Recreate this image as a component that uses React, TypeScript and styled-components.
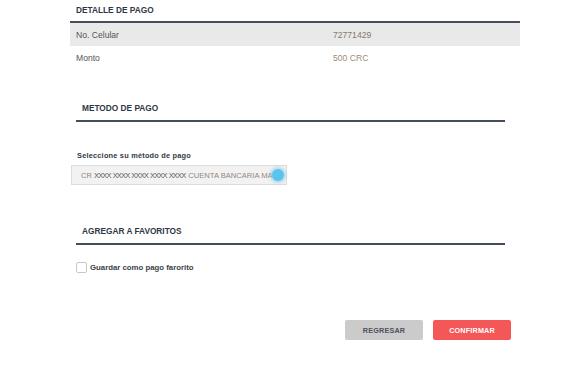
import styled, { createGlobalStyle } from "styled-components";

const GlobalStyle = createGlobalStyle`
    html, body {
        margin: 0;
        padding: 0;
        background: #ffffff;
        font-family: "Liberation Sans", Arial, sans-serif;
    }
`;

const Page = styled.div`
    width: 450px;
    padding-left: 70px;
`;

const SectionTitle = styled.div<{ $inset?: boolean }>`
    margin-left: ${(p) => (p.$inset ? "6px" : "0")};
    margin-right: ${(p) => (p.$inset ? "15px" : "0")};
    padding-left: 6px;
    line-height: ${(p) => (p.$inset ? "24px" : "21px")};
    font-size: 8.3px;
    font-weight: bold;
    color: #2e3746;
    border-bottom: 2px solid #434d5d;
`;

const DetailRow = styled.div<{ $shaded?: boolean }>`
    display: grid;
    grid-template-columns: 257px 1fr;
    align-items: center;
    height: 23px;
    padding-left: 6px;
    font-size: 8.6px;
    color: #555555;
    background: ${(p) => (p.$shaded ? "#e9e9e9" : "transparent")};
`;

const Value = styled.span<{ $tone: string }>`
    color: ${(p) => p.$tone};
`;

const Block = styled.div<{ $top: number }>`
    margin-top: ${(p) => p.$top}px;
`;

const FieldLabel = styled.div`
    margin-top: 29px;
    padding-left: 7px;
    font-size: 7.4px;
    font-weight: bold;
    letter-spacing: 0.2px;
    line-height: 10px;
    color: #333a44;
`;

const Select = styled.div`
    margin-top: 4px;
    margin-left: 1px;
    display: flex;
    align-items: center;
    padding-left: 9px;
    box-sizing: border-box;
    width: 216px;
    height: 20px;
    background: #f2f2f2;
    border: 1px solid #dcdcdc;
`;

const SelectText = styled.span`
    font-size: 7.6px;
    color: #94877b;
    white-space: nowrap;
`;

const Masked = styled.span`
    color: #5a5a5a;
    letter-spacing: -0.9px;
    word-spacing: 0.8px;
    margin: 0 3px 0 2px;
    font-size: 7.6px;
`;

const Knob = styled.span`
    position: relative;
    flex: none;
    width: 12px;
    height: 12px;
    margin-left: -6px;
    border-radius: 50%;
    background: #5cc3ea;
    box-shadow: 0 0 3px 2px rgba(120, 200, 235, 0.55);
`;

const CheckRow = styled.label`
    display: flex;
    align-items: center;
    gap: 3px;
    margin-top: 17px;
    margin-left: 6px;
    font-size: 7.8px;
    font-weight: bold;
    color: #3a3f48;
`;

const Box = styled.span`
    display: inline-block;
    width: 9px;
    height: 9px;
    border: 1px solid #c8c8c8;
    border-radius: 2px;
    background: #ffffff;
`;

const Actions = styled.div`
    display: flex;
    justify-content: flex-end;
    gap: 10px;
    margin-top: 47px;
    padding-right: 9px;
`;

const Button = styled.button<{ $primary?: boolean }>`
    width: 78px;
    height: 20px;
    border: none;
    border-radius: 2px;
    font-family: "Liberation Sans", Arial, sans-serif;
    font-size: 7.2px;
    font-weight: bold;
    letter-spacing: 0.2px;
    background: ${(p) => (p.$primary ? "#f45757" : "#cbcbcb")};
    color: ${(p) => (p.$primary ? "#ffffff" : "#4b5261")};
`;

export default function App() {
    return (
        <Page>
            <GlobalStyle />
            <SectionTitle>DETALLE DE PAGO</SectionTitle>
            <DetailRow $shaded>
                <span>No. Celular</span>
                <Value $tone="#85786c">72771429</Value>
            </DetailRow>
            <DetailRow>
                <span>Monto</span>
                <Value $tone="#a08b76">500 CRC</Value>
            </DetailRow>

            <Block $top={27}>
                <SectionTitle $inset>METODO DE PAGO</SectionTitle>
                <FieldLabel>Seleccione su método de pago</FieldLabel>
                <Select>
                    <SelectText>
                        CR<Masked>XXXX XXXX XXXX XXXX XXXX</Masked>CUENTA BANCARIA MAR
                    </SelectText>
                    <Knob />
                </Select>
            </Block>

            <Block $top={34}>
                <SectionTitle $inset>AGREGAR A FAVORITOS</SectionTitle>
                <CheckRow>
                    <Box />
                    Guardar como pago farorito
                </CheckRow>
            </Block>

            <Actions>
                <Button>REGRESAR</Button>
                <Button $primary>CONFIRMAR</Button>
            </Actions>
        </Page>
    );
}
